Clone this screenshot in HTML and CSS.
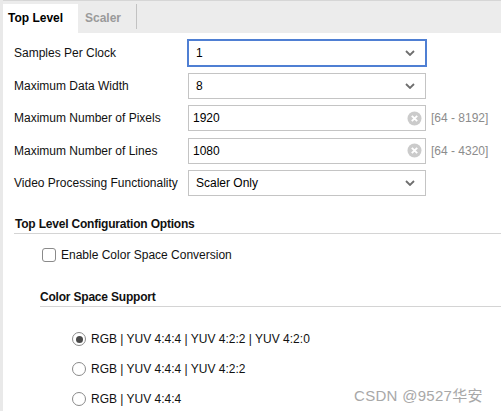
FILE: index.html
```html
<!DOCTYPE html>
<html lang="en">
<head>
  <meta charset="UTF-8">
  <meta name="viewport" content="width=device-width, initial-scale=1.0">
  <title>Scaler - Customize IP</title>
  <link rel="stylesheet" href="styles.css">
</head>
<body>
  <div class="panel">
    <div class="tab-bar">
      <div class="tab active">Top Level</div>
      <div class="tab">Scaler</div>
      <div class="tab-sep"></div>
    </div>

    <div class="page">
      <div class="form-grid">
        <label class="field-label">Samples Per Clock</label>
        <div class="box select focused">
          <span class="value">1</span>
          <svg class="chevron" width="10" height="6" viewBox="0 0 10 6"><path d="M1 1l4 4 4-4" fill="none" stroke="#6e6e6e" stroke-width="1.8"/></svg>
        </div>
        <span></span>

        <label class="field-label">Maximum Data Width</label>
        <div class="box select">
          <span class="value">8</span>
          <svg class="chevron" width="10" height="6" viewBox="0 0 10 6"><path d="M1 1l4 4 4-4" fill="none" stroke="#6e6e6e" stroke-width="1.8"/></svg>
        </div>
        <span></span>

        <label class="field-label">Maximum Number of Pixels</label>
        <div class="box input">
          <span class="value">1920</span>
          <svg class="clear" width="15" height="15" viewBox="0 0 15 15"><circle cx="7.5" cy="7.5" r="7" fill="#cbcbcb"/><path d="M4.8 4.8l5.4 5.4M10.2 4.8l-5.4 5.4" stroke="#fff" stroke-width="1.9"/></svg>
        </div>
        <span class="range">[64 - 8192]</span>

        <label class="field-label">Maximum Number of Lines</label>
        <div class="box input">
          <span class="value">1080</span>
          <svg class="clear" width="15" height="15" viewBox="0 0 15 15"><circle cx="7.5" cy="7.5" r="7" fill="#cbcbcb"/><path d="M4.8 4.8l5.4 5.4M10.2 4.8l-5.4 5.4" stroke="#fff" stroke-width="1.9"/></svg>
        </div>
        <span class="range">[64 - 4320]</span>

        <label class="field-label">Video Processing Functionality</label>
        <div class="box select">
          <span class="value">Scaler Only</span>
          <svg class="chevron" width="10" height="6" viewBox="0 0 10 6"><path d="M1 1l4 4 4-4" fill="none" stroke="#6e6e6e" stroke-width="1.8"/></svg>
        </div>
        <span></span>
      </div>

      <div class="section">
        <h3 class="section-title">Top Level Configuration Options</h3>
        <div class="check-row">
          <span class="checkbox"></span>
          <span>Enable Color Space Conversion</span>
        </div>

        <div class="subsection">
          <h3 class="section-title">Color Space Support</h3>
          <ul class="radio-list">
            <li class="radio-row"><span class="radio checked"></span>RGB | YUV 4:4:4 | YUV 4:2:2 | YUV 4:2:0</li>
            <li class="radio-row"><span class="radio"></span>RGB | YUV 4:4:4 | YUV 4:2:2</li>
            <li class="radio-row"><span class="radio"></span>RGB | YUV 4:4:4</li>
          </ul>
        </div>
      </div>
    </div>

    <div class="watermark">CSDN @9527华安</div>
  </div>
</body>
</html>
```

FILE: styles.css
```css
/* Reset */
body, h3, ul, li {
  margin: 0;
  padding: 0;
}

body {
  font-family: "Liberation Sans", Arial, sans-serif;
  font-size: 12px;
  color: #111;
  background-color: #fff;
}

.panel {
  position: relative;
  height: 411px;
  border-left: 3px solid #e9e9e9;
  overflow: hidden;
}

/* Tabs */
.tab-bar {
  display: flex;
  height: 29px;
  padding-top: 3px;
  background-color: #ececec;
  border-top: 1px solid #d6d6d6;
}

.tab {
  font-weight: bold;
  line-height: 28px;
  color: #9a9a9a;
  padding: 0 15px 0 7px;
}

.tab.active {
  width: 70px;
  padding: 0 0 0 5px;
  background-color: #fff;
  color: #000;
}

.tab-sep {
  width: 1px;
  height: 25px;
  background-color: #c2c2c2;
}

/* Form */
.page {
  padding: 7px 0 0 11px;
}

.form-grid {
  display: grid;
  grid-template-columns: 174px 238px auto;
  grid-auto-rows: 26px;
  row-gap: 6.5px;
  align-items: center;
}

.field-label {
  white-space: nowrap;
}

.box {
  display: flex;
  align-items: center;
  height: 26px;
  box-sizing: border-box;
  border: 1px solid #c4c4c4;
  background-color: #fff;
}

.select {
  padding: 0 10px 0 7px;
}

.input {
  padding: 0 3px 0 4px;
}

.box.focused {
  border-color: #4f7fd3;
  box-shadow: 0 0 0 1px #4f7fd3;
}

.value {
  flex-grow: 1;
  color: #000;
}

.range {
  margin-left: 5px;
  color: #8c8c8c;
  white-space: nowrap;
}

/* Sections */
.section {
  margin-top: 20px;
}

.section-title {
  font-size: 12px;
  font-weight: bold;
  line-height: 16px;
  letter-spacing: -0.2px;
  padding: 0 0 1px 1px;
  border-bottom: 1px solid #d4d4d4;
}

.check-row {
  display: flex;
  align-items: center;
  gap: 5px;
  margin: 14px 0 0 28px;
  height: 14px;
}

.checkbox {
  width: 14px;
  height: 14px;
  box-sizing: border-box;
  border: 1px solid #8a8a8a;
  border-radius: 3px;
}

.subsection {
  margin: 27px 0 0 26px;
}

.subsection .section-title {
  padding-left: 0;
}

.radio-list {
  list-style: none;
  margin: 17px 0 0 32px;
}

.radio-row {
  display: flex;
  align-items: center;
  gap: 5px;
  height: 30px;
}

.radio {
  width: 14px;
  height: 14px;
  box-sizing: border-box;
  border: 1px solid #8a8a8a;
  border-radius: 50%;
  display: flex;
  align-items: center;
  justify-content: center;
}

.radio.checked::after {
  content: "";
  width: 7px;
  height: 7px;
  border-radius: 50%;
  background-color: #4a4a4a;
}

.watermark {
  position: absolute;
  left: 351px;
  top: 384px;
  font-family: "Liberation Sans", "Noto Sans CJK SC", sans-serif;
  font-size: 15px;
  color: #a8a8a8;
  letter-spacing: 0.3px;
}
```
